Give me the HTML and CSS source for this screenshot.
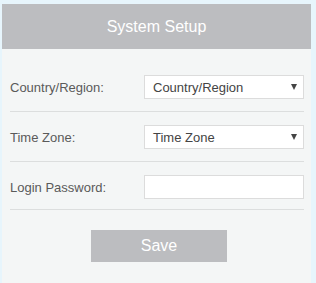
FILE: index.html
```html
<!DOCTYPE html>
<html>
<head>
<meta charset="utf-8">
<link rel="stylesheet" href="styles.css">
</head>
<body>
<div class="panel">
  <div class="header">System Setup</div>
  <div class="form">
    <div class="row">
      <label class="label">Country/Region:</label>
      <div class="select"><span>Country/Region</span><span class="caret"></span></div>
    </div>
    <div class="row">
      <label class="label">Time Zone:</label>
      <div class="select"><span>Time Zone</span><span class="caret"></span></div>
    </div>
    <div class="row row-last">
      <label class="label">Login Password:</label>
      <div class="input"></div>
    </div>
    <div class="actions">
      <button class="save">Save</button>
    </div>
  </div>
</div>
</body>
</html>
```
FILE: styles.css
```css
html, body {
  margin: 0;
  padding: 0;
  height: 100%;
}
body {
  background: #e7f5fc;
  font-family: "Liberation Sans", Arial, sans-serif;
  overflow: hidden;
}
.panel {
  margin: 4px 5px 0 2px;
  background: #f4f6f6;
  height: calc(100% - 4px);
}
.header {
  height: 45px;
  background: #bcbdc0;
  color: #fff;
  font-size: 16px;
  display: flex;
  align-items: center;
  justify-content: center;
}
.form {
  padding: 13px 7px 0 8px;
}
.row {
  display: flex;
  align-items: center;
  justify-content: space-between;
  padding: 13px 0 12px;
  border-bottom: 1px solid #dcdede;
}
.row-last {
  padding-bottom: 10px;
}
.label {
  font-size: 13px;
  color: #5a5a5a;
}
.select, .input {
  box-sizing: border-box;
  width: 160px;
  height: 24px;
  background: #fff;
  border: 1px solid #dcdcdc;
  display: flex;
  align-items: center;
  justify-content: space-between;
  padding: 0 6px 0 8px;
  font-size: 13px;
  color: #444;
}
.caret {
  width: 0;
  height: 0;
  border-left: 3.5px solid transparent;
  border-right: 3.5px solid transparent;
  border-top: 6px solid #444;
}
.actions {
  display: flex;
  justify-content: center;
  padding-top: 20px;
}
.save {
  width: 136px;
  height: 32px;
  background: #bcbdc0;
  border: none;
  color: #fff;
  font-family: "Liberation Sans", Arial, sans-serif;
  font-size: 16px;
  margin-left: 4px;
  padding: 0;
}
```
